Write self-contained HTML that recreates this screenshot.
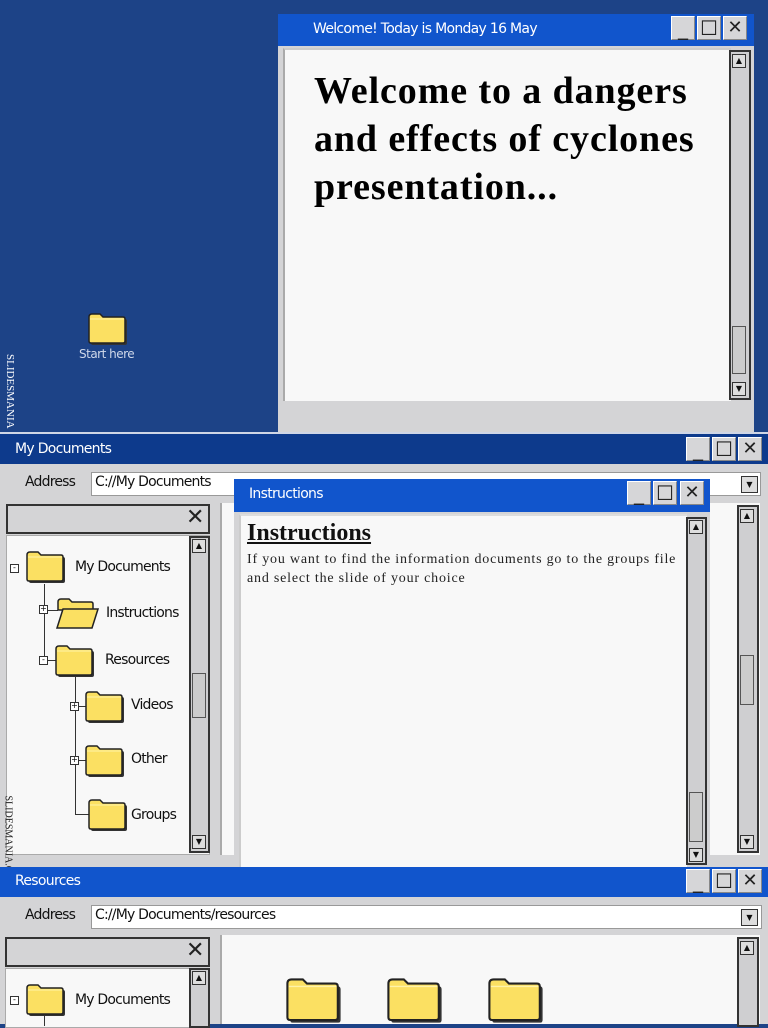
<!DOCTYPE html>
<html><head><meta charset="utf-8"><style>
*{box-sizing:border-box;margin:0;padding:0}
body{width:768px;height:1024px;overflow:hidden;background:#1d4387;position:relative;font-family:"DejaVu Sans","Liberation Sans",sans-serif}
.a{position:absolute}
.tb{position:absolute;color:#fff;font-size:14px;letter-spacing:-0.7px}
.btn{position:absolute;width:24px;height:24px;background:#d6d6d8;border:1px solid #fff;border-right-color:#888;border-bottom-color:#888;color:#222;text-align:center;font-size:20px;line-height:22px}
.gray{background:#d4d4d6}
.white{background:#f8f8f8}
.sb{position:absolute;background:#cfcfd1;border:2px solid #333}
.arr{position:absolute;left:1px;width:14px;height:14px;background:#ddd;border:1px solid #333;font-size:8px;line-height:12px;text-align:center;color:#111}
.thumb{position:absolute;left:1px;width:14px;background:#ccc;border:1px solid #555}
.lbl{position:absolute;font-size:14px;color:#111;letter-spacing:-0.8px}
svg.f{position:absolute}
.pm{position:absolute;width:9px;height:9px;border:1px solid #333;background:#fff;font-size:8px;line-height:6px;text-align:center;color:#000}
.ln{position:absolute;background:#333}
</style></head><body>
<svg width="0" height="0" style="position:absolute"><defs>
<symbol id="fold" viewBox="0 0 40 34"><path d="M3 8 Q3 5 6 5 L14 5 L17 8 L37 8 Q39 8 39 10 L39 32 Q39 34 37 34 L5 34 Q3 34 3 32 Z" fill="#333"/><path d="M1 6 Q1 3 4 3 L12 3 L15 6 L35 6 Q37 6 37 8 L37 30 Q37 32 35 32 L3 32 Q1 32 1 30 Z" fill="#fbe062" stroke="#222" stroke-width="1.5"/><path d="M2 8 L36 8" stroke="#fff3a8" stroke-width="1"/></symbol>
<symbol id="ofold" viewBox="0 0 44 34"><path d="M3 6 Q3 3 6 3 L14 3 L17 6 L36 6 Q38 6 38 8 L38 14 L3 14 Z" fill="#fbe062" stroke="#222" stroke-width="1.5"/><path d="M8 13 L43 13 L37 32 L2 32 Z" fill="#fbe062" stroke="#222" stroke-width="1.5"/></symbol>
</defs></svg>

<!-- desktop icon -->
<svg class="f" style="left:88px;top:311px" width="40" height="34"><use href="#fold"/></svg>
<div class="a" style="left:79px;top:347px;color:#cfd8ea;font-size:12px;letter-spacing:-0.5px">Start here</div>
<div class="a" style="left:-30px;top:388px;transform:rotate(90deg);color:#fff;font-family:'Liberation Serif',serif;font-size:11px;width:80px">SLIDESMANIA</div>

<!-- welcome window -->
<div class="a gray" style="left:278px;top:14px;width:476px;height:420px"></div>
<div class="a" style="left:278px;top:14px;width:476px;height:32px;background:#1155cc"></div>
<div class="tb" style="left:313px;top:21px">Welcome! Today is Monday 16 May</div>
<div class="btn" style="left:671px;top:16px">_</div>
<div class="btn" style="left:697px;top:16px">☐</div>
<div class="btn" style="left:723px;top:16px;font-size:18px">✕</div>
<div class="a white" style="left:283px;top:48px;width:448px;height:353px;border-left:2px solid #aaa;border-top:2px solid #ccc"></div>
<div class="a" style="left:314px;top:67px;font-family:'Liberation Serif',serif;font-weight:bold;font-size:38px;letter-spacing:0.9px;line-height:48px;color:#000;white-space:nowrap">Welcome to a dangers<br>and effects of cyclones<br>presentation...</div>
<div class="sb" style="left:729px;top:50px;width:22px;height:350px"><div class="arr" style="top:2px">▲</div><div class="thumb" style="top:274px;height:48px"></div><div class="arr" style="top:330px">▼</div></div>
<div class="a" style="left:0;top:432px;width:768px;height:2px;background:#cfd6e6"></div>

<!-- My Documents window -->
<div class="a gray" style="left:0;top:434px;width:768px;height:433px"></div>
<div class="a" style="left:0;top:434px;width:768px;height:30px;background:#0d3a8c"></div>
<div class="tb" style="left:15px;top:441px">My Documents</div>
<div class="btn" style="left:686px;top:437px">_</div>
<div class="btn" style="left:712px;top:437px">☐</div>
<div class="btn" style="left:738px;top:437px;font-size:18px">✕</div>
<div class="lbl" style="left:25px;top:474px">Address</div>
<div class="a" style="left:91px;top:472px;width:670px;height:24px;background:#fff;border:1px solid #999"></div>
<div class="lbl" style="left:95px;top:474px">C://My Documents</div>
<div class="arr" style="left:741px;top:476px;width:17px;height:17px;line-height:15px">▼</div>
<div class="a gray" style="left:6px;top:504px;width:204px;height:30px;border:2px solid #333"></div>
<div class="a" style="left:186px;top:505px;font-size:22px;color:#222">✕</div>
<div class="a white" style="left:6px;top:535px;width:204px;height:320px;border:1px solid #aaa"></div>
<div class="sb" style="left:189px;top:536px;width:21px;height:317px"><div class="arr" style="top:1px">▲</div><div class="thumb" style="top:135px;height:45px"></div><div class="arr" style="top:297px">▼</div></div>
<div class="a white" style="left:220px;top:503px;width:540px;height:352px;border-left:2px solid #aaa"></div>
<div class="sb" style="left:737px;top:505px;width:22px;height:348px"><div class="arr" style="top:2px">▲</div><div class="thumb" style="top:148px;height:50px"></div><div class="arr" style="top:328px">▼</div></div>

<!-- tree -->
<div class="ln" style="left:44px;top:584px;width:1px;height:78px"></div>
<div class="ln" style="left:75px;top:676px;width:1px;height:138px"></div>
<div class="ln" style="left:44px;top:610px;width:14px;height:1px"></div>
<div class="ln" style="left:44px;top:660px;width:14px;height:1px"></div>
<div class="ln" style="left:75px;top:706px;width:12px;height:1px"></div>
<div class="ln" style="left:75px;top:760px;width:12px;height:1px"></div>
<div class="ln" style="left:75px;top:814px;width:14px;height:1px"></div>
<div class="pm" style="left:10px;top:564px">-</div>
<div class="pm" style="left:39px;top:605px">+</div>
<div class="pm" style="left:39px;top:656px">-</div>
<div class="pm" style="left:70px;top:702px">+</div>
<div class="pm" style="left:70px;top:756px">+</div>
<svg class="f" style="left:26px;top:549px" width="40" height="34"><use href="#fold"/></svg>
<svg class="f" style="left:55px;top:596px" width="44" height="34"><use href="#ofold"/></svg>
<svg class="f" style="left:55px;top:643px" width="40" height="34"><use href="#fold"/></svg>
<svg class="f" style="left:85px;top:689px" width="40" height="34"><use href="#fold"/></svg>
<svg class="f" style="left:85px;top:743px" width="40" height="34"><use href="#fold"/></svg>
<svg class="f" style="left:88px;top:797px" width="40" height="34"><use href="#fold"/></svg>
<div class="lbl" style="left:75px;top:559px">My Documents</div>
<div class="lbl" style="left:106px;top:605px">Instructions</div>
<div class="lbl" style="left:105px;top:652px">Resources</div>
<div class="lbl" style="left:131px;top:697px">Videos</div>
<div class="lbl" style="left:131px;top:751px">Other</div>
<div class="lbl" style="left:131px;top:807px">Groups</div>
<div class="a" style="left:-22px;top:820px;transform:rotate(90deg);color:#222;font-family:'Liberation Serif',serif;font-size:10px;width:60px">SLIDESMANIA.C</div>

<!-- Instructions window -->
<div class="a gray" style="left:234px;top:479px;width:476px;height:388px"></div>
<div class="a" style="left:234px;top:479px;width:476px;height:33px;background:#1155cc"></div>
<div class="tb" style="left:249px;top:486px">Instructions</div>
<div class="btn" style="left:627px;top:481px">_</div>
<div class="btn" style="left:653px;top:481px">☐</div>
<div class="btn" style="left:680px;top:481px;font-size:18px">✕</div>
<div class="a white" style="left:239px;top:514px;width:448px;height:353px;border-left:2px solid #ccc;border-top:2px solid #ddd"></div>
<div class="a" style="left:247px;top:520px;font-family:'Liberation Serif',serif;font-weight:bold;font-size:24px;text-decoration:underline;color:#111">Instructions</div>
<div class="a" style="left:247px;top:550px;font-family:'Liberation Serif',serif;font-size:14px;line-height:19px;color:#222;letter-spacing:0.8px;white-space:nowrap">If you want to find the information documents go to the groups file<br>and select the slide of your choice</div>
<div class="sb" style="left:686px;top:517px;width:21px;height:348px"><div class="arr" style="top:1px">▲</div><div class="thumb" style="top:273px;height:50px"></div><div class="arr" style="top:329px">▼</div></div>

<!-- Resources window -->
<div class="a gray" style="left:0;top:867px;width:768px;height:157px"></div>
<div class="a" style="left:0;top:867px;width:768px;height:30px;background:#1155cc"></div>
<div class="tb" style="left:15px;top:873px">Resources</div>
<div class="btn" style="left:686px;top:869px">_</div>
<div class="btn" style="left:712px;top:869px">☐</div>
<div class="btn" style="left:738px;top:869px;font-size:18px">✕</div>
<div class="lbl" style="left:25px;top:907px">Address</div>
<div class="a" style="left:91px;top:905px;width:671px;height:24px;background:#fff;border:1px solid #999"></div>
<div class="lbl" style="left:95px;top:907px">C://My Documents/resources</div>
<div class="arr" style="left:741px;top:909px;width:17px;height:17px;line-height:15px">▼</div>
<div class="a gray" style="left:5px;top:937px;width:205px;height:30px;border:2px solid #333"></div>
<div class="a" style="left:186px;top:938px;font-size:22px;color:#222">✕</div>
<div class="a white" style="left:5px;top:968px;width:205px;height:60px;border:1px solid #aaa"></div>
<div class="sb" style="left:189px;top:968px;width:21px;height:60px"><div class="arr" style="top:1px">▲</div></div>
<div class="pm" style="left:10px;top:996px">-</div>
<svg class="f" style="left:26px;top:982px" width="40" height="34"><use href="#fold"/></svg>
<div class="ln" style="left:44px;top:1016px;width:1px;height:10px"></div>
<div class="lbl" style="left:75px;top:992px">My Documents</div>
<div class="a white" style="left:220px;top:935px;width:540px;height:89px;border-left:2px solid #aaa"></div>
<div class="sb" style="left:737px;top:937px;width:22px;height:90px"><div class="arr" style="top:2px">▲</div></div>
<svg class="f" style="left:286px;top:975px" width="56" height="48" viewBox="0 0 40 34"><use href="#fold"/></svg>
<svg class="f" style="left:387px;top:975px" width="56" height="48" viewBox="0 0 40 34"><use href="#fold"/></svg>
<svg class="f" style="left:488px;top:975px" width="56" height="48" viewBox="0 0 40 34"><use href="#fold"/></svg>
</body></html>
